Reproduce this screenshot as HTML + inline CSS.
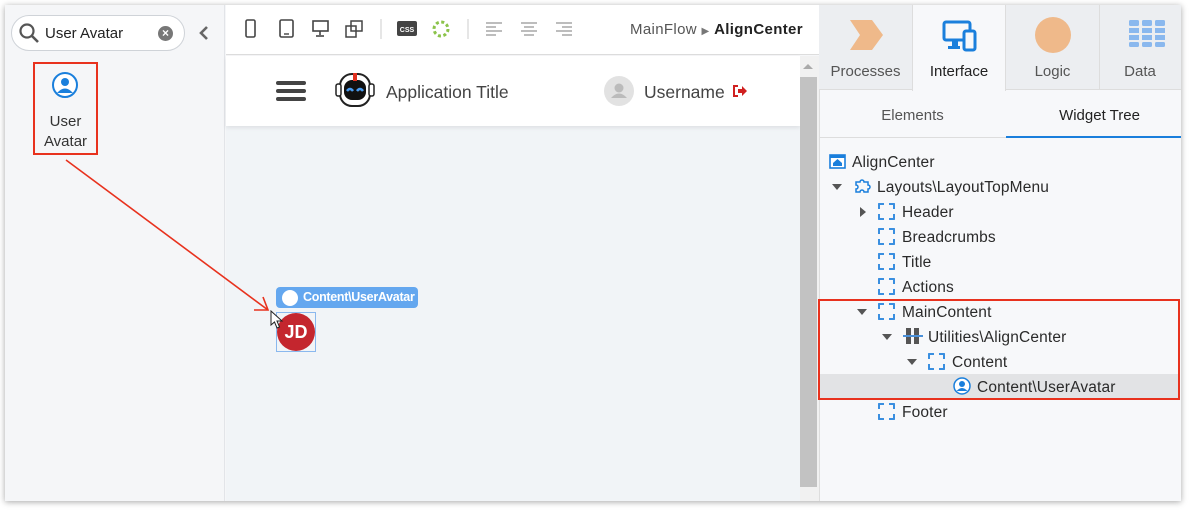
<!DOCTYPE html>
<html><head><style>
*{margin:0;padding:0;box-sizing:border-box}
body{width:1195px;height:516px;background:#fff;font-family:"Liberation Sans",sans-serif;position:relative;overflow:hidden}
.a{position:absolute}
.app{left:5px;top:5px;width:1176px;height:496px;box-shadow:0 1px 6px rgba(0,0,0,.35);background:#f5f6f8}
.tr{position:absolute;font-size:15.5px;color:#2a2a2a;height:25px;line-height:25px;letter-spacing:.15px}
.br{display:inline-block;width:17px;height:17px;vertical-align:-3px;margin-right:7px;border:2px dashed #3a8fe0;border-radius:1px}
.tri{position:absolute;width:0;height:0}
.dn{border-left:5px solid transparent;border-right:5px solid transparent;border-top:6px solid #555}
</style></head><body>
<div class="a app"></div>
<div class="a" style="left:5px;top:5px;width:220px;height:496px;background:#f5f6f8;border-right:1px solid #e2e4e8"></div>
<div class="a" style="left:11px;top:15px;width:174px;height:36px;border:1px solid #cfd3d8;border-radius:18px;background:#fff"></div>
<svg class="a" style="left:18px;top:22px" width="24" height="24"><circle cx="9" cy="9" r="6.5" fill="none" stroke="#555" stroke-width="2.2"/><line x1="14" y1="14" x2="20" y2="20" stroke="#555" stroke-width="2.6"/></svg>
<div class="a" style="left:45px;top:25px;font-size:15px;color:#222">User Avatar</div>
<div class="a" style="left:158px;top:26px;width:15px;height:15px;border-radius:50%;background:#777;color:#fff;font-size:12px;line-height:15px;text-align:center;font-weight:bold">×</div>
<svg class="a" style="left:198px;top:25px" width="12" height="16"><path d="M9 2 L3 8 L9 14" fill="none" stroke="#666" stroke-width="2.6"/></svg>
<div class="a" style="left:33px;top:62px;width:65px;height:93px;border:2px solid #e8321e"></div>
<svg class="a" style="left:51px;top:71px" width="28" height="28"><circle cx="14" cy="14" r="12" fill="#fff" stroke="#1a7fdc" stroke-width="2"/><circle cx="14" cy="11" r="4" fill="#1a7fdc"/><path d="M6 22 Q14 13 22 22 Z" fill="#1a7fdc"/></svg>
<div class="a" style="left:33px;top:112px;width:65px;text-align:center;font-size:15px;line-height:20px;color:#333">User<br>Avatar</div>
<div class="a" style="left:226px;top:5px;width:593px;height:50px;background:#fff;border-bottom:1px solid #ddd"></div>
<svg class="a" style="left:240px;top:18px" width="340" height="24">
<rect x="6" y="2" width="9" height="17" rx="1.5" fill="none" stroke="#444" stroke-width="1.6"/>
<rect x="40" y="2" width="13" height="17" rx="1.5" fill="none" stroke="#444" stroke-width="1.6"/><line x1="44" y1="16" x2="49" y2="16" stroke="#444" stroke-width="1.4"/>
<rect x="73" y="3" width="15" height="10" fill="none" stroke="#444" stroke-width="1.6"/><line x1="80" y1="13" x2="80" y2="17" stroke="#444" stroke-width="1.6"/><line x1="76" y1="18" x2="84" y2="18" stroke="#444" stroke-width="1.6"/>
<rect x="106" y="8" width="10" height="11" fill="none" stroke="#444" stroke-width="1.5"/><rect x="111" y="3" width="11" height="10" fill="none" stroke="#444" stroke-width="1.5"/>
<line x1="141" y1="1" x2="141" y2="21" stroke="#ddd" stroke-width="1.5"/>
<rect x="157" y="3" width="20" height="15" rx="2" fill="#444"/><text x="167" y="14" font-size="7" fill="#fff" text-anchor="middle" font-family="Liberation Sans" font-weight="bold">CSS</text>
<circle cx="201" cy="11" r="7" fill="none" stroke="#8bc34a" stroke-width="3" stroke-dasharray="3 2.5"/>
<line x1="228" y1="1" x2="228" y2="21" stroke="#ddd" stroke-width="1.5"/>
<g stroke="#999" stroke-width="1.3"><line x1="246" y1="5" x2="262" y2="5"/><line x1="246" y1="9" x2="256" y2="9"/><line x1="246" y1="13" x2="262" y2="13"/><line x1="246" y1="17" x2="256" y2="17"/>
<line x1="281" y1="5" x2="297" y2="5"/><line x1="284" y1="9" x2="294" y2="9"/><line x1="281" y1="13" x2="297" y2="13"/><line x1="284" y1="17" x2="294" y2="17"/>
<line x1="316" y1="5" x2="332" y2="5"/><line x1="322" y1="9" x2="332" y2="9"/><line x1="316" y1="13" x2="332" y2="13"/><line x1="322" y1="17" x2="332" y2="17"/></g>
</svg>
<div class="a" style="left:630px;top:21px;font-size:15px;color:#555;letter-spacing:.35px">MainFlow <span style="color:#777;font-size:10px">▶</span> <b style="color:#222">AlignCenter</b></div>
<div class="a" style="left:226px;top:56px;width:574px;height:445px;background:#f1f4f7"></div>
<div class="a" style="left:226px;top:56px;width:574px;height:70px;background:#fff;box-shadow:0 2px 4px rgba(0,0,0,.08)"></div>
<div class="a" style="left:800px;top:56px;width:19px;height:445px;background:#f1f1f1"></div>
<div class="a" style="left:800px;top:77px;width:17px;height:410px;background:#c2c2c2"></div>
<div class="a" style="left:803px;top:64px;border-left:5px solid transparent;border-right:5px solid transparent;border-bottom:5px solid #aaa;width:0"></div>
<div class="a" style="left:276px;top:81px;width:30px;height:4px;background:#444;border-radius:2px;box-shadow:0 8px 0 #444,0 16px 0 #444"></div>
<svg class="a" style="left:334px;top:70px" width="42" height="40"><rect x="6" y="4" width="30" height="32" rx="12" fill="#fff" stroke="#222" stroke-width="2"/><rect x="10" y="10" width="22" height="20" rx="8" fill="#111"/><rect x="19" y="3" width="4" height="8" fill="#e03020"/><path d="M13 21 q3-4 6 0 M23 21 q3-4 6 0" stroke="#4a9cf0" stroke-width="2.5" fill="none"/><rect x="2" y="14" width="5" height="12" rx="2" fill="#fff" stroke="#222" stroke-width="1.5"/><rect x="35" y="14" width="5" height="12" rx="2" fill="#fff" stroke="#222" stroke-width="1.5"/></svg>
<div class="a" style="left:386px;top:82px;font-size:17.5px;color:#444">Application Title</div>
<svg class="a" style="left:604px;top:76px" width="30" height="30"><circle cx="15" cy="15" r="15" fill="#e2e2e2"/><circle cx="15" cy="12" r="4.5" fill="#bbb"/><path d="M7 22 Q15 13 23 22 Z" fill="#bbb"/></svg>
<div class="a" style="left:644px;top:82px;font-size:17.5px;color:#444">Username</div>
<svg class="a" style="left:732px;top:84px" width="16" height="14"><path d="M6 2 H2 V12 H6" fill="none" stroke="#d02020" stroke-width="2"/><path d="M6 5 H10 V2 L15 7 L10 12 V9 H6 Z" fill="#d02020"/></svg>
<svg class="a" style="left:0;top:0" width="300" height="330"><line x1="66" y1="160" x2="268" y2="310" stroke="#e8321e" stroke-width="1.6"/><path d="M254 310 L268 310 L263 297" fill="none" stroke="#e8321e" stroke-width="1.6"/></svg>
<div class="a" style="left:276px;top:287px;width:142px;height:21px;background:#64a7ef;border-radius:4px;color:#fff;font-size:12.5px;font-weight:bold;line-height:21px;padding-left:27px;letter-spacing:-.3px">Content\UserAvatar</div>
<div class="a" style="left:282px;top:290px;width:16px;height:16px;border-radius:50%;background:#fff"></div>
<div class="a" style="left:276px;top:312px;width:40px;height:40px;border:1px solid #8ab8ee"></div>
<div class="a" style="left:277px;top:313px;width:38px;height:38px;border-radius:50%;background:#c4262e;color:#fff;font-size:18px;font-weight:bold;text-align:center;line-height:38px">JD</div>
<svg class="a" style="left:270px;top:310px" width="14" height="20"><path d="M1 1 V15 L4.5 12 L7 18 L9.5 17 L7 11 H12 Z" fill="#fff" stroke="#222" stroke-width="1"/></svg>
<div class="a" style="left:819px;top:5px;width:362px;height:496px;background:#f7f8fa;border-left:1px solid #ddd"></div>
<div class="a" style="left:819px;top:5px;width:362px;height:85px;background:#eceef1;border-bottom:1px solid #ddd"></div>
<div class="a" style="left:912px;top:5px;width:94px;height:86px;background:#f7f8fa;border-left:1px solid #ddd;border-right:1px solid #ddd"></div>
<div class="a" style="left:1099px;top:5px;width:1px;height:85px;background:#ddd"></div>
<svg class="a" style="left:850px;top:20px" width="34" height="30"><path d="M0 0 H22 L33 15 L22 30 H0 L10 15 Z" fill="#efb98a"/></svg>
<svg class="a" style="left:942px;top:20px" width="36" height="32"><rect x="2" y="2" width="26" height="18" rx="2" fill="none" stroke="#1a7fdc" stroke-width="3"/><rect x="10" y="20" width="6" height="6" fill="#1a7fdc"/><rect x="6" y="26" width="12" height="3" fill="#1a7fdc"/><rect x="22" y="11" width="11" height="19" rx="2" fill="#f7f8fa" stroke="#1a7fdc" stroke-width="3"/></svg>
<div class="a" style="left:1035px;top:17px;width:36px;height:36px;border-radius:50%;background:#efb98a"></div>
<svg class="a" style="left:1129px;top:20px" width="36" height="28" fill="#8ab8ee"><rect x="0" y="0" width="10" height="6" rx="1.5"/><rect x="13" y="0" width="10" height="6" rx="1.5"/><rect x="26" y="0" width="10" height="6" rx="1.5"/><rect x="0" y="8" width="10" height="5"/><rect x="13" y="8" width="10" height="5"/><rect x="26" y="8" width="10" height="5"/><rect x="0" y="15" width="10" height="5"/><rect x="13" y="15" width="10" height="5"/><rect x="26" y="15" width="10" height="5"/><rect x="0" y="22" width="10" height="5" rx="1.5"/><rect x="13" y="22" width="10" height="5" rx="1.5"/><rect x="26" y="22" width="10" height="5" rx="1.5"/></svg>
<div class="a" style="left:819px;top:63px;width:93px;text-align:center;font-size:15px;color:#555">Processes</div>
<div class="a" style="left:912px;top:63px;width:94px;text-align:center;font-size:15px;color:#222">Interface</div>
<div class="a" style="left:1006px;top:63px;width:93px;text-align:center;font-size:15px;color:#555">Logic</div>
<div class="a" style="left:1099px;top:63px;width:82px;text-align:center;font-size:15px;color:#555">Data</div>
<div class="a" style="left:819px;top:137px;width:362px;height:1px;background:#ddd"></div>
<div class="a" style="left:1006px;top:136px;width:175px;height:2px;background:#1a7fdc"></div>
<div class="a" style="left:819px;top:107px;width:187px;text-align:center;font-size:15px;color:#555">Elements</div>
<div class="a" style="left:1006px;top:107px;width:187px;text-align:center;font-size:15px;color:#222">Widget Tree</div>
<div class="a" style="left:820px;top:374px;width:359px;height:25px;background:#e2e3e5"></div>
<div class="tr" style="left:829px;top:150px"><svg width="17" height="15" style="vertical-align:-2px;margin-right:6px"><rect x="1" y="1" width="15" height="13" fill="#fff" stroke="#1a7fdc" stroke-width="1.6"/><rect x="1" y="1" width="15" height="3" fill="#1a7fdc"/><path d="M4 9 L8.5 5 L13 9 V12 H4 Z" fill="#1a7fdc"/></svg>AlignCenter</div>
<div class="tri dn" style="left:832px;top:184px"></div>
<div class="tr" style="left:853px;top:175px"><svg width="18" height="16" style="vertical-align:-2px;margin-right:6px"><path d="M3 4 H7 A2 2 0 0 1 11 4 H15 V7 A2 2 0 0 1 15 11 V14 H11 A2 2 0 0 0 7 14 H3 V11 A2 2 0 0 0 3 7 Z" fill="none" stroke="#1a7fdc" stroke-width="1.5"/></svg>Layouts\LayoutTopMenu</div>
<div class="tri" style="left:860px;top:207px;border-top:5px solid transparent;border-bottom:5px solid transparent;border-left:6px solid #555"></div>
<div class="tr" style="left:878px;top:200px"><span class="br"></span>Header</div>
<div class="tr" style="left:878px;top:225px"><span class="br"></span>Breadcrumbs</div>
<div class="tr" style="left:878px;top:250px"><span class="br"></span>Title</div>
<div class="tr" style="left:878px;top:275px"><span class="br"></span>Actions</div>
<div class="tri dn" style="left:857px;top:309px"></div>
<div class="tr" style="left:878px;top:300px"><span class="br"></span>MainContent</div>
<div class="tri dn" style="left:882px;top:334px"></div>
<div class="tr" style="left:903px;top:325px"><svg width="20" height="18" style="vertical-align:-3px;margin-right:5px"><rect x="3" y="1" width="5" height="16" fill="#555"/><rect x="11" y="1" width="5" height="16" fill="#555"/><rect x="0" y="8" width="20" height="2" fill="#4a90d9"/></svg>Utilities\AlignCenter</div>
<div class="tri dn" style="left:907px;top:359px"></div>
<div class="tr" style="left:928px;top:350px"><span class="br"></span>Content</div>
<div class="tr" style="left:953px;top:375px"><svg width="18" height="18" style="vertical-align:-3px;margin-right:6px"><circle cx="9" cy="9" r="8" fill="#fff" stroke="#1a7fdc" stroke-width="1.5"/><circle cx="9" cy="7" r="3" fill="#1a7fdc"/><path d="M3.5 14 Q9 8 14.5 14 Z" fill="#1a7fdc"/></svg>Content\UserAvatar</div>
<div class="tr" style="left:878px;top:400px"><span class="br"></span>Footer</div>
<div class="a" style="left:818px;top:299px;width:362px;height:101px;border:2px solid #e8321e"></div>
</body></html>
